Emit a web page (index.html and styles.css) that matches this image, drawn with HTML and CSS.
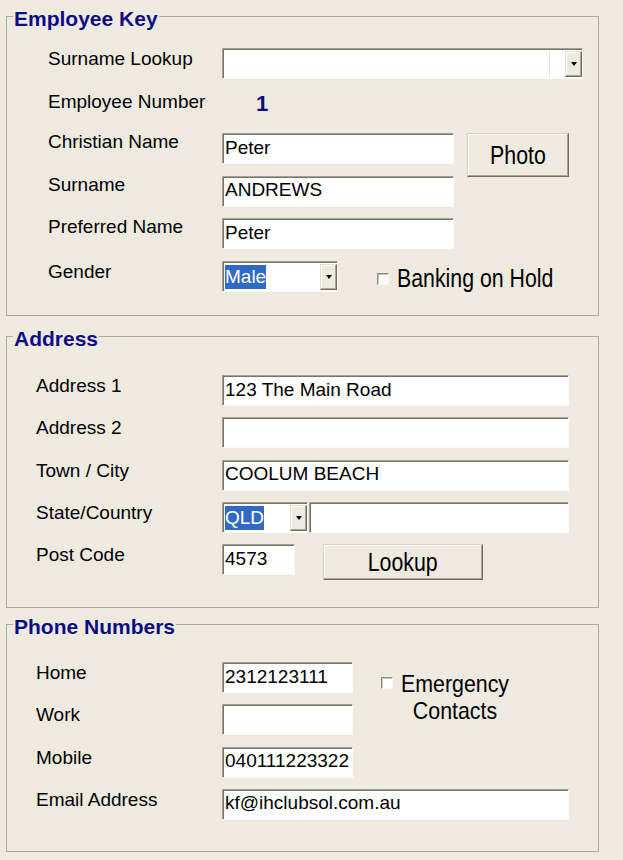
FILE: index.html
```html
<!DOCTYPE html>
<html lang="en">
<head>
    <meta charset="UTF-8" />
    <title>Employee Details</title>
    <link rel="stylesheet" href="styles.css">
</head>
<body>
    <fieldset class="group group-key">
        <legend>Employee Key</legend>
        <div class="form form-key">
            <span class="lbl">Surname Lookup</span>
            <div class="field">
                <div class="combo combo-lookup">
                    <span class="combo-text"></span>
                    <span class="combo-spacer"></span>
                    <span class="drop"></span>
                </div>
            </div>

            <span class="lbl">Employee Number</span>
            <div class="field"><span class="emp-no">1</span></div>

            <label class="lbl lbl-hi" for="christian">Christian Name</label>
            <div class="field">
                <input type="text" id="christian" class="txt txt-name" value="Peter" />
                <button class="btn btn-photo"><span class="narrow">Photo</span></button>
            </div>

            <label class="lbl lbl-hi" for="surname">Surname</label>
            <div class="field"><input type="text" id="surname" class="txt txt-name" value="ANDREWS" /></div>

            <label class="lbl lbl-hi" for="preferred">Preferred Name</label>
            <div class="field"><input type="text" id="preferred" class="txt txt-name" value="Peter" /></div>

            <span class="lbl">Gender</span>
            <div class="field">
                <div class="combo combo-gender">
                    <span class="combo-text"><span class="sel">Male</span></span>
                    <span class="drop"></span>
                </div>
                <label class="check check-bank">
                    <span class="box"></span>
                    <span class="check-text narrow">Banking on Hold</span>
                </label>
            </div>
        </div>
    </fieldset>

    <fieldset class="group group-addr">
        <legend>Address</legend>
        <div class="form form-addr">
            <label class="lbl" for="addr1">Address 1</label>
            <div class="field"><input type="text" id="addr1" class="txt txt-wide" value="123 The Main Road" /></div>

            <label class="lbl" for="addr2">Address 2</label>
            <div class="field"><input type="text" id="addr2" class="txt txt-wide" value="" /></div>

            <label class="lbl" for="town">Town / City</label>
            <div class="field"><input type="text" id="town" class="txt txt-wide" value="COOLUM BEACH" /></div>

            <span class="lbl">State/Country</span>
            <div class="field">
                <div class="combo combo-state">
                    <span class="combo-text"><span class="sel">QLD</span></span>
                    <span class="drop"></span>
                </div>
                <input type="text" class="txt txt-country" value="" />
            </div>

            <label class="lbl" for="postcode">Post Code</label>
            <div class="field">
                <input type="text" id="postcode" class="txt txt-post" value="4573" />
                <button class="btn btn-lookup"><span class="narrow">Lookup</span></button>
            </div>
        </div>
    </fieldset>

    <fieldset class="group group-phone">
        <legend>Phone Numbers</legend>
        <div class="form form-phone">
            <label class="lbl" for="home">Home</label>
            <div class="field">
                <input type="text" id="home" class="txt txt-phone" value="2312123111" />
                <label class="check check-emergency">
                    <span class="box"></span>
                    <span class="check-text narrow">Emergency<br>Contacts</span>
                </label>
            </div>

            <label class="lbl" for="work">Work</label>
            <div class="field"><input type="text" id="work" class="txt txt-phone" value="" /></div>

            <label class="lbl" for="mobile">Mobile</label>
            <div class="field"><input type="text" id="mobile" class="txt txt-phone" value="040111223322" /></div>

            <label class="lbl" for="email">Email Address</label>
            <div class="field"><input type="text" id="email" class="txt txt-wide" value="kf@ihclubsol.com.au" /></div>
        </div>
    </fieldset>
</body>
</html>
```

FILE: styles.css
```css
:root {
    --face: #eeeae0;
    --legend: #0b0c84;
    --etch: #aeab9c;
}

body {
    margin: 0;
    padding-top: 1px;
    background-color: var(--face);
    font-family: "Liberation Sans", Arial, sans-serif;
    font-size: 19px;
    color: #000;
}

/* group boxes */
.group {
    box-sizing: border-box;
    width: 593px;
    min-width: 0;
    margin: 0 0 0 6px;
    padding: 0;
    border: 1px solid var(--etch);
}

.group legend {
    margin-left: 6px;
    padding: 6px 1px 0;
    font-size: 21px;
    font-weight: bold;
    line-height: 24px;
    color: var(--legend);
}

.group-key {
    height: 315px;
}

.group-addr {
    height: 287px;
    margin-top: 5px;
}

.group-phone {
    height: 243px;
    margin-top: 1px;
}

/* label / field grid */
.form {
    display: grid;
    grid-auto-rows: 31px;
    align-items: start;
}

.form-key {
    grid-template-columns: 174px 1fr;
    row-gap: 11.5px;
    padding: 17px 0 0 41px;
}

.form-addr {
    grid-template-columns: 186px 1fr;
    row-gap: 11.25px;
    padding: 24px 0 0 29px;
}

.form-phone {
    grid-template-columns: 186px 1fr;
    row-gap: 11.25px;
    padding: 23px 0 0 29px;
}

.lbl {
    line-height: 22px;
    white-space: nowrap;
}

.lbl-hi {
    line-height: 18px;
}

.field {
    display: flex;
    align-items: flex-start;
    height: 31px;
}

.emp-no {
    margin: 1px 0 0 34px;
    font-size: 22px;
    font-weight: bold;
    line-height: 24px;
    color: var(--legend);
}

/* text boxes */
.txt {
    box-sizing: border-box;
    height: 31px;
    margin: 0;
    padding: 0 2px 2px;
    font: inherit;
    color: #000;
    background-color: #fff;
    border: 1px solid;
    border-color: #a3a193 #fbfaf6 #fbfaf6 #a3a193;
    box-shadow: inset 1px 1px 0 #77756a;
    outline: none;
}

.txt-name { width: 232px; }
.txt-wide { width: 347px; }
.txt-post { width: 73px; }
.txt-phone { width: 131px; }
.txt-country { width: 260px; margin-left: 1px; }

/* combo boxes */
.combo {
    box-sizing: border-box;
    display: flex;
    height: 31px;
    padding: 2px 0 1px 2px;
    background-color: #fff;
    border: 1px solid;
    border-color: #a3a193 #fbfaf6 #fbfaf6 #a3a193;
    box-shadow: inset 1px 1px 0 #77756a;
}

.combo-lookup { width: 361px; }
.combo-gender { width: 116px; }
.combo-state { width: 86px; }

.combo-text {
    flex: 1;
    display: flex;
    align-items: center;
}

.combo-spacer {
    width: 15px;
    border-left: 1px solid #e4e1d6;
}

.sel {
    height: 24px;
    line-height: 24px;
    color: #fff;
    background-color: #316ac5;
}

.drop {
    box-sizing: border-box;
    display: flex;
    align-items: center;
    justify-content: center;
    width: 17px;
    background-color: var(--face);
    border: 1px solid;
    border-color: #e2dfd3 #6f6d62 #6f6d62 #e2dfd3;
    box-shadow: inset -1px -1px 0 #a8a698, inset 1px 1px 0 #fff;
}

.drop::after {
    content: "";
    border-left: 3px solid transparent;
    border-right: 3px solid transparent;
    border-top: 4px solid #000;
}

/* the old dialog font is a tall condensed face */
.narrow {
    display: inline-block;
    transform: scaleX(0.82);
    transform-origin: center;
}

/* buttons */
.btn {
    box-sizing: border-box;
    padding: 0;
    font-family: "Liberation Sans", Arial, sans-serif;
    font-size: 26px;
    color: #000;
    background-color: var(--face);
    border: 1px solid;
    border-color: #d6d3c6 #6f6d62 #6f6d62 #d6d3c6;
    box-shadow: inset -1px -1px 0 #a9a698, inset 1px 1px 0 #fff;
}

.btn-photo {
    width: 102px;
    height: 44px;
    margin-left: 13px;
}

.btn-lookup {
    width: 160px;
    height: 36px;
    margin-left: 28px;
}

/* check boxes */
.check {
    display: flex;
    align-items: flex-start;
    font-size: 26px;
    line-height: 26px;
    white-space: nowrap;
}

.check .narrow {
    transform-origin: left;
}

.box {
    box-sizing: border-box;
    flex: none;
    width: 12px;
    height: 12px;
    margin-right: 8px;
    background-color: #fff;
    border: 1px solid;
    border-color: #8e8c80 #f6f5ef #f6f5ef #8e8c80;
    box-shadow: inset 1px 1px 0 #c9c6b8;
}

.check-bank {
    margin-left: 39px;
}

.check-bank .box {
    margin-top: 12.5px;
}

.check-bank .check-text {
    margin-top: 4px;
}

.check-emergency {
    margin-left: 28px;
    font-size: 24px;
    line-height: 27px;
}

.check-emergency .box {
    margin-top: 15px;
}

.check-emergency .narrow {
    margin-top: 8px;
    text-align: center;
    transform: scaleX(0.89);
}
```
